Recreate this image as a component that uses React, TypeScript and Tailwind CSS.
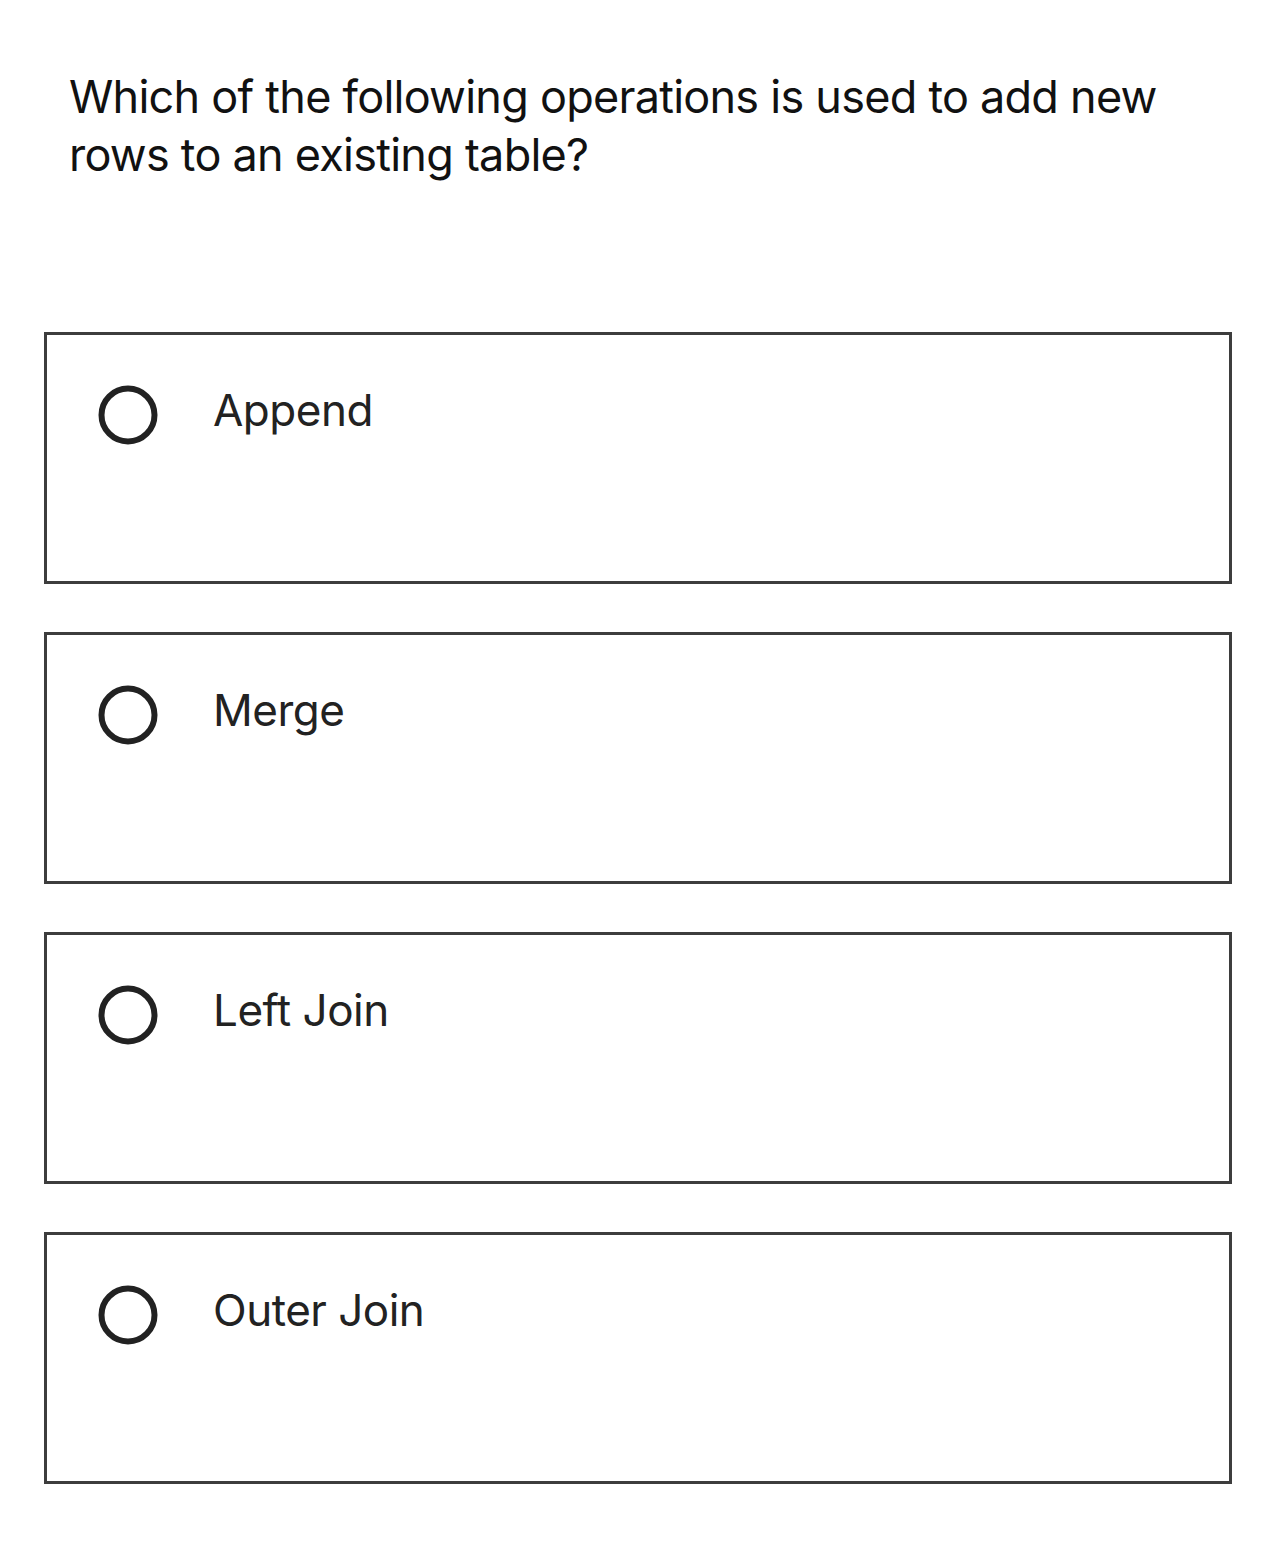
import React from "react";

const options = ["Append", "Merge", "Left Join", "Outer Join"];

const RadioRing = () => (
  <svg width="60" height="60" viewBox="0 0 60 60" className="shrink-0">
    <circle cx="30" cy="30" r="26.5" fill="none" stroke="#222222" strokeWidth="6" />
  </svg>
);

export default function App() {
  return (
    <div className="min-h-[1559px] w-[1268px] bg-white font-['Inter',sans-serif] text-[#111]">
      <div className="pt-[68px] pl-[69px] pr-[60px]">
        <h1 className="text-[45px] leading-[58px] font-normal tracking-[-0.75px]">
          Which of the following operations is used to add new rows to an existing table?
        </h1>
      </div>

      <div className="mt-[148px] ml-[44px] w-[1188px] flex flex-col gap-[48px]">
        {options.map((opt) => (
          <label
            key={opt}
            className="h-[252px] border-[3px] border-[#3d3d3d] flex items-start pt-[50px] pl-[51px] cursor-pointer"
          >
            <RadioRing />
            <span className="ml-[55px] mt-[-3px] text-[44px] leading-[56px] tracking-[-0.5px] text-[#222]">
              {opt}
            </span>
          </label>
        ))}
      </div>
    </div>
  );
}
